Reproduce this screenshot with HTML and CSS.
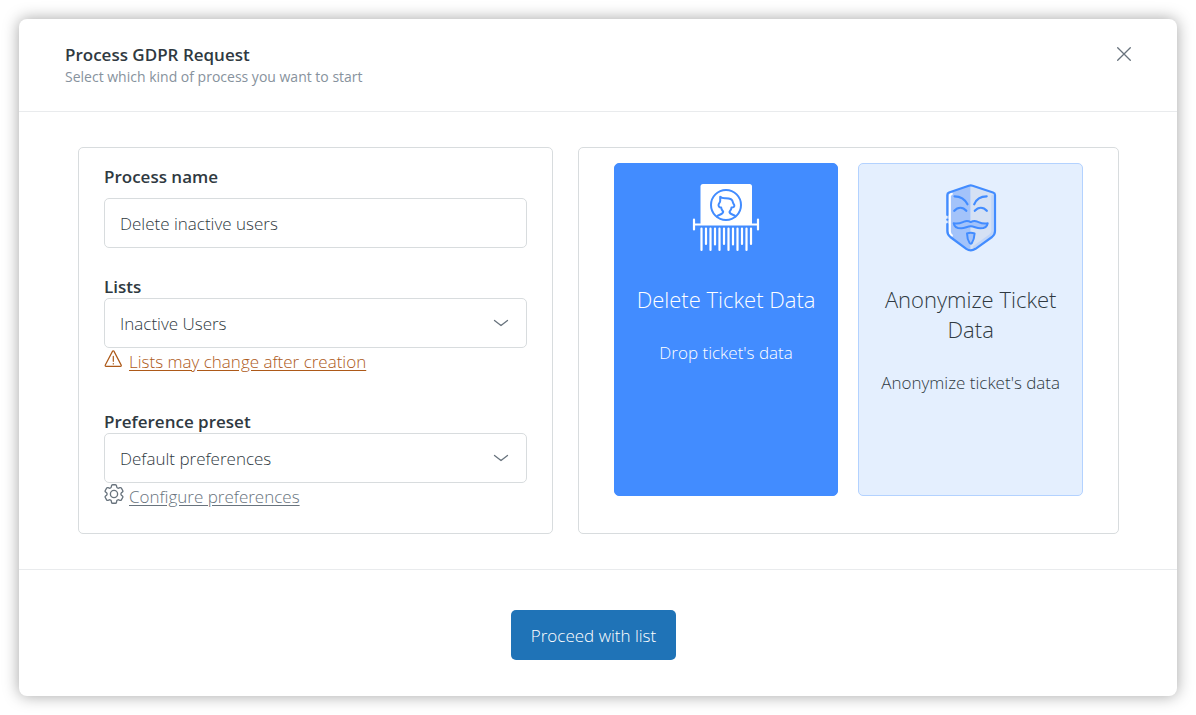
FILE: index.html
```
<!DOCTYPE html>
<html lang="en">
<head>
    <meta charset="UTF-8">
    <meta name="viewport" content="width=device-width, initial-scale=1.0">
    <title>Process GDPR Request</title>
    <link rel="stylesheet" href="styles.css">
</head>
<body>
    <div class="modal" role="dialog" aria-labelledby="modal-title">
        <header class="modal-header">
            <div>
                <h1 class="modal-title" id="modal-title">Process GDPR Request</h1>
                <p class="modal-subtitle">Select which kind of process you want to start</p>
            </div>
            <button class="close-button" type="button" aria-label="Close">
                <svg width="14" height="14" viewBox="0 0 14 14" fill="none" stroke="currentColor" stroke-width="1.3" stroke-linecap="round">
                    <path d="M.7.7l12.6 12.6M13.3.7L.7 13.3"/>
                </svg>
            </button>
        </header>

        <main class="modal-body">
            <form class="panel settings" id="gdpr-form">
                <div class="field name-field">
                    <label for="process-name">Process name</label>
                    <input class="control" type="text" id="process-name" value="Delete inactive users">
                </div>

                <div class="field">
                    <label for="lists">Lists</label>
                    <div class="select-wrap">
                        <select class="control" id="lists">
                            <option>Inactive Users</option>
                        </select>
                        <svg class="chevron" width="16" height="8" viewBox="0 0 16 8" fill="none" stroke="currentColor" stroke-width="1.3" stroke-linecap="round" stroke-linejoin="round">
                            <path d="M1.5 1.5L8 6.5l6.5-5"/>
                        </svg>
                    </div>
                    <div class="hint warning">
                        <svg width="20" height="20" viewBox="0 0 20 20" fill="none" stroke="currentColor" stroke-width="1.2" stroke-linecap="round" stroke-linejoin="round">
                            <path d="M8.6 2.1c.3-.5 1-.5 1.3 0l7.3 14c.3.6 0 1.3-.7 1.3H2c-.7 0-1-.7-.7-1.3z"/>
                            <path d="M9.3 7.3v5M9.3 14.5v.4"/>
                        </svg>
                        <a href="#">Lists may change after creation</a>
                    </div>
                </div>

                <div class="field">
                    <label for="preset">Preference preset</label>
                    <div class="select-wrap">
                        <select class="control" id="preset">
                            <option>Default preferences</option>
                        </select>
                        <svg class="chevron" width="16" height="8" viewBox="0 0 16 8" fill="none" stroke="currentColor" stroke-width="1.3" stroke-linecap="round" stroke-linejoin="round">
                            <path d="M1.5 1.5L8 6.5l6.5-5"/>
                        </svg>
                    </div>
                    <div class="hint">
                        <svg width="20" height="20" viewBox="2.3 2.3 19.4 19.4" fill="none" stroke="currentColor" stroke-width="1.3" stroke-linejoin="round">
                            <path d="M9.594 3.94c.09-.542.56-.94 1.11-.94h2.593c.55 0 1.02.398 1.11.94l.213 1.281c.063.374.313.686.645.87.074.04.147.083.22.127.324.196.72.257 1.075.124l1.217-.456a1.125 1.125 0 011.37.49l1.296 2.247a1.125 1.125 0 01-.26 1.431l-1.003.827c-.293.24-.438.613-.431.992a6.759 6.759 0 010 .255c-.007.378.138.75.43.99l1.005.828c.424.35.534.954.26 1.43l-1.298 2.247a1.125 1.125 0 01-1.369.491l-1.217-.456c-.355-.133-.75-.072-1.076.124a6.57 6.57 0 01-.22.128c-.331.183-.581.495-.644.869l-.213 1.28c-.09.543-.56.941-1.11.941h-2.594c-.55 0-1.02-.398-1.11-.94l-.213-1.281c-.062-.374-.312-.686-.644-.87a6.52 6.52 0 01-.22-.127c-.325-.196-.72-.257-1.076-.124l-1.217.456a1.125 1.125 0 01-1.369-.49l-1.297-2.247a1.125 1.125 0 01.26-1.431l1.004-.827c.292-.24.437-.613.43-.992a6.932 6.932 0 010-.255c.007-.378-.138-.75-.43-.99l-1.004-.828a1.125 1.125 0 01-.26-1.43l1.297-2.247a1.125 1.125 0 011.37-.491l1.216.456c.356.133.751.072 1.076-.124.072-.044.146-.087.22-.128.332-.183.582-.495.644-.869l.214-1.281z"/>
                            <circle cx="12" cy="12" r="3.5"/>
                        </svg>
                        <a href="#">Configure preferences</a>
                    </div>
                </div>
            </form>

            <section class="panel choices">
                <button class="choice selected" type="button" aria-pressed="true">
                    <!-- shredder -->
                    <svg class="choice-icon" viewBox="0 0 68 68" fill="none" stroke-linecap="round" stroke-linejoin="round">
                        <path d="M8.5 40V2.5A2.5 2.5 0 0111 0h46.500A2.500 2.500 0 0160 2.500V40z" fill="#fff"/>
                        <path d="M2 40.500h64M2 35.500v10M66 35.500v10" stroke="#fff" stroke-width="2.200"/>
                        <path d="M9.500 44.500V66M18.500 44.500V66M27.500 44.500V66M36.500 44.500V66M45.500 44.500V66M54.500 44.500V66" stroke="#fff" stroke-width="2.200"/>
                        <path d="M14 44.500V60M23 44.500v16M32 44.500V60M41 44.500v16M50 44.500V60M59 44.500V60" stroke="#fff" stroke-width="2.200"/>
                        <circle cx="34" cy="21" r="15" stroke="#428cff" stroke-width="2"/>
                        <path d="M25 32.500c1-2 5.800-1.700 6.200-4.600 0-.8-1.700-1.400-2-4.400-2 .1-3-1.500-2.600-3 .4-1.500 1.600-1.900 1.600-3.800v-4c1.600 1.700 3.400 1.500 5.500 1.500 4 0 6.700.7 7 3.500.2 2 1.300 2 1.600 3.600.2 1.400-.9 2.200-2.800 2.300-.3 2.800-2 3.500-2 4.400.4 2.900 5.200 2.500 6 4.500" stroke="#428cff" stroke-width="2"/>
                    </svg>
                    <span class="choice-title">Delete Ticket Data</span>
                    <span class="choice-text">Drop ticket's data</span>
                </button>

                <button class="choice" type="button" aria-pressed="false">
                    <!-- mask -->
                    <svg class="choice-icon" viewBox="0 0 68 68" fill="none" stroke-linecap="round" stroke-linejoin="round">
                        <path d="M33.700 1.500L12 8.500q-1.700.7-1.700 2.500v36q0 3.500 3 6l16 11.800q2.200 1.500 4.400 1.500z" fill="#a3c3fa"/>
                        <path d="M33.700 1.500L56 8.500q2 .7 2 2.500v36q0 3.500-3 6L38.500 64.800q-2.400 1.500-4.800 1.500z" fill="#d5e1f4"/>
                        <path d="M12.800 12.500q0-2 2-2.600M12.800 13v34.500q0 2.500 2 4" stroke="#fff" stroke-width="2.200"/>
                        <path d="M55.500 12v35q0 2.500-2.500 4.500L37 63" stroke="#c0d5f8" stroke-width="2.500"/>
                        <path d="M10.300 31V11q0-1.800 1.700-2.500l19.800-6.800q1.900-.6 3.800 0L56 8.500q2 .7 2 2.500v36q0 3.500-3 6L38.500 64.800q-4.800 3-9.200 0L13.300 53q-3-2.500-3-6v-7M10.300 35.500v.2" stroke="#428cff" stroke-width="2.200"/>
                        <path d="M17.500 12.300c5.500 0 10.500 3 13 8M49.700 12.300c-5.500 0-10.500 3-12.500 8M17.300 26.800c3.500-4.100 8.600-4.100 12 0M37.800 26.800c3.500-4.100 8.600-4.100 12 0" stroke="#428cff" stroke-width="2.200"/>
                        <path d="M16.700 39.300c5 1 7-.3 10.300-1.700 2.700-1.100 5-.5 6.700.5 1.700-1 4-1.600 6.700-.5 3.300 1.400 5.300 2.700 10.300 1.700-.5 3.300-3.700 5-7.500 5-4 0-6-2-9.500-2s-5.500 2-9.500 2c-3.800 0-7-1.700-7.500-5z" fill="#a3c3fa" stroke="#428cff" stroke-width="2"/>
                        <path d="M30 49.500q3.700-1.600 7.600 0-.4 6-2.700 9.500-1.200 1.400-2.300 0-2.400-3.500-2.600-9.500z" fill="#a3c3fa" stroke="#428cff" stroke-width="2"/>
                    </svg>
                    <span class="choice-title">Anonymize Ticket Data</span>
                    <span class="choice-text">Anonymize ticket's data</span>
                </button>
            </section>
        </main>

        <footer class="modal-footer">
            <button class="proceed-button" type="submit" form="gdpr-form">Proceed with list</button>
        </footer>
    </div>
</body>
</html>
```
FILE: styles.css
```
* {
    box-sizing: border-box;
}

body {
    margin: 0;
    padding: 19px;
    background-color: #fff;
    color: #2f3941;
    font-family: "Open Sans", "Noto Sans", sans-serif;
    font-size: 17px;
    font-weight: 350;
}

button,
input,
select {
    font: inherit;
    color: inherit;
}

.modal {
    background-color: #fff;
    border-radius: 8px;
    box-shadow: 0 0 16px rgba(0, 0, 0, 0.36);
}

.modal-header {
    display: flex;
    justify-content: space-between;
    align-items: flex-start;
    padding: 24px 46px;
    border-bottom: 1px solid #e9ebed;
}

.modal-title {
    margin: 0;
    font-size: 17px;
    font-weight: 550;
    line-height: 24px;
}

.modal-subtitle {
    margin: 0;
    color: #87929d;
    font-size: 14px;
    font-weight: 400;
    line-height: 20px;
}

.close-button {
    display: flex;
    padding: 4px 0;
    border: none;
    background: none;
    color: #68737d;
    cursor: pointer;
}

.modal-body {
    display: grid;
    grid-template-columns: 1fr 1.14fr;
    gap: 25px;
    padding: 35px 58px 35px 59px;
    border-bottom: 1px solid #e9ebed;
}

.panel {
    border: 1px solid #d8dcde;
    border-radius: 5px;
}

.settings {
    padding: 18px 25px 22px;
}

.field {
    margin-bottom: 35px;
}

.field:last-child {
    margin-bottom: 0;
}

.field label {
    display: block;
    font-weight: 550;
    line-height: 22px;
}

.name-field {
    margin-bottom: 28px;
}

.name-field label {
    margin-bottom: 10px;
}

.control {
    display: block;
    width: 100%;
    height: 50px;
    padding: 0 15px;
    border: 1px solid #d8dcde;
    border-radius: 5px;
    background-color: #fff;
    appearance: none;
}

.select-wrap {
    position: relative;
}

.chevron {
    position: absolute;
    top: 21px;
    right: 18px;
    color: #68737d;
    pointer-events: none;
}

.hint {
    display: flex;
    gap: 5px;
    height: 28px;
    color: #68737d;
    line-height: 28px;
}

.hint svg {
    margin-top: 1px;
}

.hint a {
    color: inherit;
    text-underline-offset: 2px;
}

.hint.warning {
    color: #ad5918;
}

.choices {
    display: grid;
    grid-template-columns: 1fr 1fr;
    gap: 20px;
    padding: 15px 35px 37px;
}

.choice {
    display: flex;
    flex-direction: column;
    align-items: center;
    padding: 20px 12px;
    border: 1px solid #b3d2ff;
    border-radius: 5px;
    background-color: #e4effe;
    text-align: center;
    cursor: pointer;
}

.choice.selected {
    border-color: #428cff;
    background-color: #428cff;
    color: #fff;
}

.choice-icon {
    width: 68px;
    height: 68px;
    margin-bottom: 32px;
}

.choice-title {
    margin-bottom: 25px;
    font-size: 22px;
    line-height: 30px;
}

.choice-text {
    line-height: 28px;
}

.modal-footer {
    display: flex;
    justify-content: center;
    padding: 40px 45px 36px 36px;
}

.proceed-button {
    height: 50px;
    padding: 0 20px;
    border: none;
    border-radius: 5px;
    background-color: #1f73b7;
    color: #fff;
    cursor: pointer;
}
```
